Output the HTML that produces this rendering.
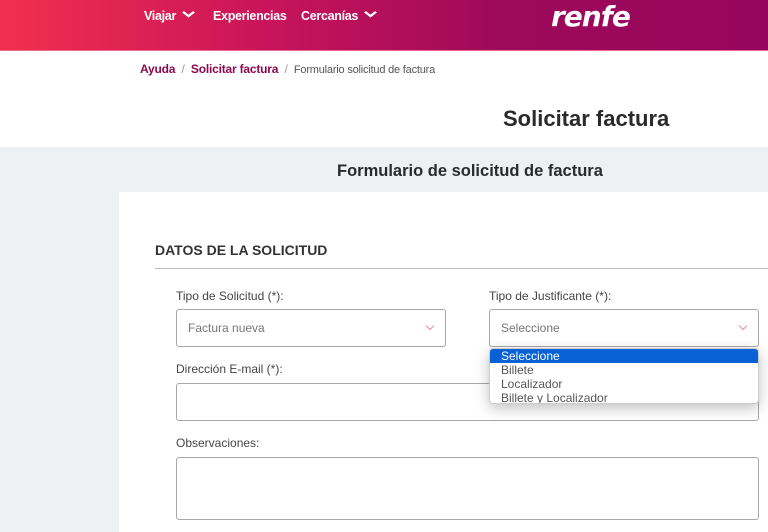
<!DOCTYPE html>
<html><head><meta charset="utf-8"><style>
*{margin:0;padding:0;box-sizing:border-box}
body{width:768px;height:526px;overflow:hidden;font-family:"Liberation Sans",sans-serif;background:#edf1f3;position:relative}
.hdr{position:absolute;left:0;top:0;width:768px;height:51px;background:linear-gradient(90deg,#f2304d 0%,#c8145a 35%,#9e0a5a 65%,#96065d 100%);border-bottom:1px solid #f06a8f}
.nav{position:absolute;top:9px;color:#fff;font-weight:bold;font-size:12.5px;letter-spacing:-0.3px}
.chev{display:inline-block;width:7px;height:7px;border-right:2px solid #fff;border-bottom:2px solid #fff;transform:scaleX(1.3) rotate(45deg);margin-left:9px;position:relative;top:-4px}
.logo{position:absolute;left:551px;top:0px;color:#fff;font-style:italic;font-weight:bold;font-size:28px;font-family:"DejaVu Sans",sans-serif;letter-spacing:-1px}
.white{position:absolute;left:0;top:51px;width:768px;height:96px;background:#fff}
.bc{position:absolute;left:140px;top:62px;font-size:12px;color:#999;letter-spacing:-0.2px}
.bc b{color:#8e0a4e}
.bc span{color:#555;font-size:11px}
h1{position:absolute;left:503px;top:106px;font-size:22px;color:#2a2a2a;font-weight:bold}
h2{position:absolute;left:337px;top:162px;font-size:16.5px;color:#2a2a2a;font-weight:bold}
.card{position:absolute;left:119px;top:192px;width:660px;height:340px;background:#fff}
.sec{position:absolute;left:155px;top:242px;font-size:14px;font-weight:bold;color:#333}
.line{position:absolute;left:155px;top:268px;width:613px;height:1px;background:#bbb}
.lbl{position:absolute;font-size:12px;color:#444}
.box{position:absolute;border:1px solid #a8a8a8;border-radius:3px;background:#fff;font-size:12px;color:#777;padding-left:11px;line-height:37px}
.sch{position:absolute;right:12px;top:13px;width:6px;height:6px;border-right:1px solid #e58aa0;border-bottom:1px solid #e58aa0;transform:rotate(45deg)}
.dd{position:absolute;left:489px;top:348px;width:270px;height:56px;background:#fff;border:1px solid #ccc;border-radius:4px;box-shadow:0 4px 14px rgba(0,0,0,.25);font-size:12px;color:#555;overflow:hidden}
.dd div{height:14px;line-height:14px;padding-left:11px}
.dd .sel{background:#0862d6;color:#fff}
</style></head><body>
<div class="hdr"></div>
<div class="nav" style="left:144px">Viajar<span class="chev"></span></div>
<div class="nav" style="left:213px">Experiencias</div>
<div class="nav" style="left:301px">Cercanías<span class="chev"></span></div>
<div class="logo">renfe</div>
<div class="white"></div>
<div class="bc"><b>Ayuda</b> &nbsp;/ &nbsp;<b>Solicitar factura</b> &nbsp;/ &nbsp;<span>Formulario solicitud de factura</span></div>
<h1>Solicitar factura</h1>
<h2>Formulario de solicitud de factura</h2>
<div class="card"></div>
<div class="sec">DATOS DE LA SOLICITUD</div>
<div class="line"></div>
<div class="lbl" style="left:176px;top:289px">Tipo de Solicitud (*):</div>
<div class="box" style="left:176px;top:309px;width:270px;height:38px">Factura nueva<span class="sch"></span></div>
<div class="lbl" style="left:489px;top:289px">Tipo de Justificante (*):</div>
<div class="box" style="left:489px;top:309px;width:270px;height:38px">Seleccione<span class="sch"></span></div>
<div class="lbl" style="left:176px;top:362px">Dirección E-mail (*):</div>
<div class="box" style="left:176px;top:383px;width:583px;height:38px"></div>
<div class="lbl" style="left:176px;top:436px">Observaciones:</div>
<div class="box" style="left:176px;top:457px;width:583px;height:63px"></div>
<div class="dd"><div class="sel">Seleccione</div><div>Billete</div><div>Localizador</div><div>Billete y Localizador</div></div>
</body></html>
